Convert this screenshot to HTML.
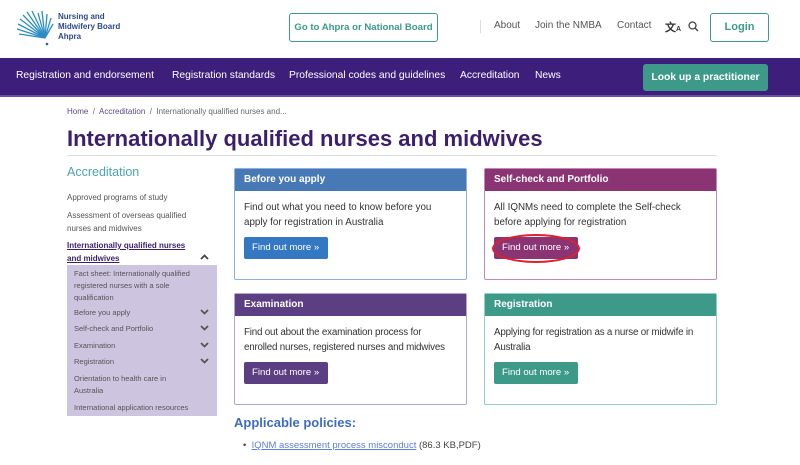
<!DOCTYPE html>
<html><head><meta charset="utf-8"><style>
*{margin:0;padding:0;box-sizing:border-box}
body{width:800px;height:465px;overflow:hidden;background:#fff;font-family:"Liberation Sans",sans-serif;position:relative;color:#444}
.a{position:absolute;white-space:nowrap}
.nav{position:absolute;left:0;top:58px;width:800px;height:39px;background:#3d1f7b;border-bottom:2px solid #6a52a0}
.nav span{position:absolute;top:12px;color:#fff;font-size:10.3px}
.card{position:absolute;width:233px;height:112px;border:1px solid;border-radius:2px}
.card .h{height:22px;color:#fff;font-weight:bold;font-size:10px;padding:5px 9px}
.card p{font-size:9.8px;line-height:15px;padding:9px 8px 0 9px;color:#333}
.card .b{position:absolute;left:9px;top:68px;width:84px;height:22px;border-radius:2px;color:#fff;font-size:9.6px;padding:5px 0 0 8px}
.side{position:absolute;left:67px;font-size:8px;color:#555;line-height:13px}
.sub{position:absolute;left:74px;font-size:7.5px;color:#555;line-height:12px}
.chev{position:absolute;left:200px}
</style></head><body>
<svg class="a" style="left:14px;top:8px" width="42" height="38" viewBox="0 0 42 38">
<g stroke="#2a8ec4" stroke-width="1.3" fill="none">
<path d="M31 30 L4 16"/><path d="M31 30 L6 11"/><path d="M31 30 L9 7"/><path d="M31 30 L13 4"/><path d="M31 30 L18 3"/><path d="M31 30 L24 5"/><path d="M31 30 L28 3"/><path d="M31 30 L33 6"/><path d="M31 30 L37 10"/><path d="M31 30 L39 16"/><path d="M31 30 L3 21"/><path d="M31 30 L5 26"/></g>
<circle cx="33" cy="36" r="1.3" fill="#2a5fa8"/></svg>
<div class="a" style="left:58px;top:12px;font-size:8px;line-height:10px;font-weight:bold;color:#2b4a8c">Nursing and<br>Midwifery Board<br>Ahpra</div>
<div class="a" style="left:289px;top:13px;width:149px;height:29px;border:1.5px solid #3b9a8a;border-radius:3px;color:#3b9a8a;font-weight:bold;font-size:9.6px;text-align:center;padding-top:8px">Go to Ahpra or National Board</div>
<div class="a" style="left:480px;top:20px;width:1px;height:13px;background:#ddd"></div>
<div class="a" style="left:494px;top:20px;font-size:10px;color:#555">About</div>
<div class="a" style="left:535px;top:20px;font-size:10px;color:#555">Join the NMBA</div>
<div class="a" style="left:617px;top:20px;font-size:10px;color:#555">Contact</div>
<div class="a" style="left:665px;top:19px;font-size:11px;color:#333;font-weight:bold">文<span style="font-size:7px">A</span></div>
<svg class="a" style="left:688px;top:21px" width="11" height="11" viewBox="0 0 11 11"><circle cx="4.5" cy="4.5" r="3.5" stroke="#444" stroke-width="1.3" fill="none"/><path d="M7 7L10 10" stroke="#444" stroke-width="1.4"/></svg>
<div class="a" style="left:710px;top:13px;width:59px;height:29px;border:1.5px solid #3b9a8a;border-radius:3px;color:#3b9a8a;font-weight:bold;font-size:11px;text-align:center;padding-top:7px">Login</div>
<div class="nav">
<span style="left:16px">Registration and endorsement</span>
<span style="left:172px">Registration standards</span>
<span style="left:289px">Professional codes and guidelines</span>
<span style="left:460px">Accreditation</span>
<span style="left:535px">News</span>
<div class="a" style="left:643px;top:6px;width:125px;height:27px;background:#3d9a88;border-radius:3px;color:#fff;font-weight:bold;font-size:10.3px;text-align:center;padding-top:8px">Look up a practitioner</div>
</div>
<div class="a" style="left:67px;top:107px;font-size:8px;color:#666"><span style="color:#5a4a8a">Home</span> &nbsp;/&nbsp; <span style="color:#5a4a8a">Accreditation</span> &nbsp;/&nbsp; Internationally qualified nurses and...</div>
<div class="a" style="left:67px;top:126px;font-size:22px;font-weight:bold;color:#3b1f6e">Internationally qualified nurses and midwives</div>
<div class="a" style="left:67px;top:155px;width:650px;height:1px;background:#ddd"></div>
<div class="a" style="left:67px;top:165px;font-size:12.5px;color:#4ba3b5">Accreditation</div>
<div class="side" style="top:191px">Approved programs of study</div>
<div class="side" style="top:209px">Assessment of overseas qualified<br>nurses and midwives</div>
<div class="side" style="top:239px;font-weight:bold;color:#3b1f6e;text-decoration:underline">Internationally qualified nurses<br>and midwives</div>
<svg class="chev" style="top:254px" width="9" height="6"><path d="M1 5L4.5 1.5L8 5" stroke="#444" stroke-width="1.8" fill="none"/></svg>
<div class="a" style="left:67px;top:265px;width:150px;height:151px;background:#cdc4e0"></div>
<div class="sub" style="top:268px">Fact sheet: Internationally qualified<br>registered nurses with a sole<br>qualification</div>
<div class="sub" style="top:307px">Before you apply</div>
<div class="sub" style="top:323px">Self-check and Portfolio</div>
<div class="sub" style="top:340px">Examination</div>
<div class="sub" style="top:356px">Registration</div>
<div class="sub" style="top:373px">Orientation to health care in<br>Australia</div>
<div class="sub" style="top:402px">International application resources</div>
<svg class="chev" style="top:309px" width="9" height="6"><path d="M1 1L4.5 4.5L8 1" stroke="#555" stroke-width="1.8" fill="none"/></svg>
<svg class="chev" style="top:325px" width="9" height="6"><path d="M1 1L4.5 4.5L8 1" stroke="#555" stroke-width="1.8" fill="none"/></svg>
<svg class="chev" style="top:342px" width="9" height="6"><path d="M1 1L4.5 4.5L8 1" stroke="#555" stroke-width="1.8" fill="none"/></svg>
<svg class="chev" style="top:358px" width="9" height="6"><path d="M1 1L4.5 4.5L8 1" stroke="#555" stroke-width="1.8" fill="none"/></svg>
<div class="card" style="left:234px;top:168px;border-color:#8fb0da"><div class="h" style="background:#4679b5">Before you apply</div><p>Find out what you need to know before you<br>apply for registration in Australia</p><div class="b" style="background:#3378c0">Find out more »</div></div>
<div class="card" style="left:484px;top:168px;border-color:#c08ab5"><div class="h" style="background:#8a3474">Self-check and Portfolio</div><p>All IQNMs need to complete the Self-check<br>before applying for registration</p><div class="b" style="background:#8a3474">Find out more »</div>
<div class="a" style="left:7px;top:65px;width:88px;height:29px;border:2.5px solid #e0202a;border-radius:50%"></div></div>
<div class="card" style="left:234px;top:293px;border-color:#b3a5cf"><div class="h" style="background:#5c3f82">Examination</div><p style="letter-spacing:-0.2px">Find out about the examination process for<br>enrolled nurses, registered nurses and midwives</p><div class="b" style="background:#5c3f82">Find out more »</div></div>
<div class="card" style="left:484px;top:293px;border-color:#8fd0c0"><div class="h" style="background:#3d9a88">Registration</div><p style="letter-spacing:-0.2px">Applying for registration as a nurse or midwife in<br>Australia</p><div class="b" style="background:#3d9a88">Find out more »</div></div>
<div class="a" style="left:234px;top:415px;font-size:13px;font-weight:bold;color:#3f6cc0">Applicable policies:</div>
<div class="a" style="left:243px;top:440px;font-size:9.5px;color:#444">•&nbsp; <span style="color:#5a7ed8;text-decoration:underline">IQNM assessment process misconduct</span> (86.3 KB,PDF)</div>
</body></html>
